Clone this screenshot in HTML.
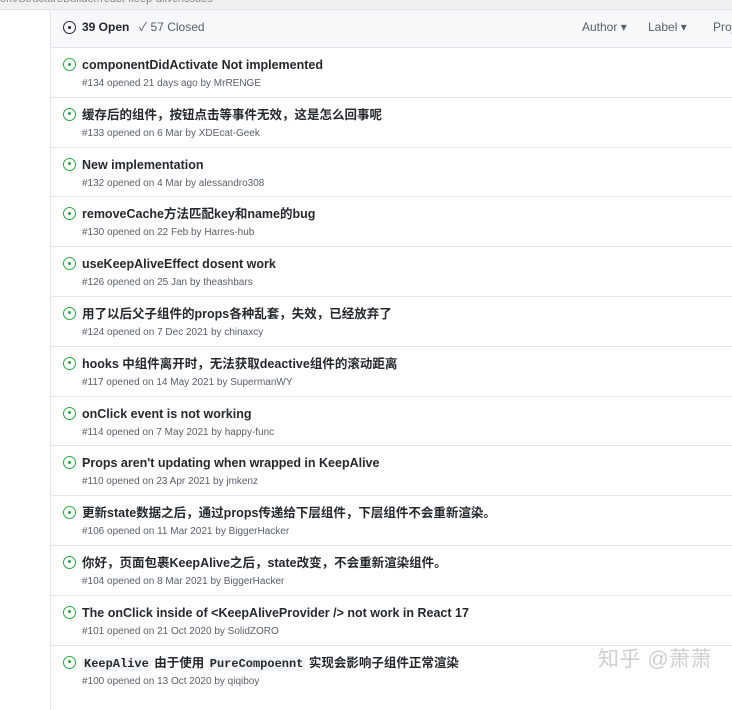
<!DOCTYPE html>
<html><head><meta charset="utf-8"><style>
*{margin:0;padding:0;box-sizing:border-box}
body{width:732px;height:691px;overflow:hidden;background:#fff;font-family:"Liberation Sans","Noto Sans CJK SC",sans-serif;position:relative}
.top{position:absolute;left:0;top:0;width:732px;height:10px;background:#f0f0f0;border-bottom:1px solid #e1e4e8;overflow:hidden}
.top span{position:absolute;left:0;top:-7px;font-size:11px;color:#888}
.box{position:absolute;left:50px;top:10px;width:700px;height:700px;border-left:1px solid #e1e4e8}
.hdr{height:38px;background:#f6f8fa;border-bottom:1px solid #e1e4e8;position:relative;font-size:12px;line-height:14px}
.hdr .o{position:absolute;left:31px;top:10px;font-weight:bold;color:#24292e}
.hdr .c{position:absolute;left:88px;top:10px;color:#586069}
.hdr .f{position:absolute;top:10px;color:#586069}
.icon{position:absolute;left:12px;width:13px;height:13px;border:1.5px solid #28a745;border-radius:50%}
.icon:after{content:"";position:absolute;left:3.5px;top:3.5px;width:3px;height:3px;background:#28a745;border-radius:50%}
.hdr .icon{border-color:#24292e;top:11px}
.hdr .icon:after{background:#24292e}
.row{position:relative;height:49.8px;border-bottom:1px solid #e1e4e8}
.row .icon{top:10px}
.t{position:absolute;left:31px;top:9px;height:16px;line-height:16px;font-size:12.5px;font-weight:bold;color:#24292e;white-space:nowrap}
.m{position:absolute;left:31px;top:30px;height:12px;line-height:12px;font-size:10px;color:#586069;white-space:nowrap}
code{font-family:"Liberation Mono",monospace;background:#f3f4f6;padding:0 2px;font-size:12px;line-height:16px}
.wm{position:absolute;left:598px;top:647px;font-size:21px;line-height:26px;color:#cfcfcf;letter-spacing:0.5px}
</style></head><body>
<div class="top"><span>om/StructureBuilder/react-keep-alive/issues</span></div>
<div class="box">
<div class="hdr"><div class="icon"></div><span class="o">39 Open</span><span class="c">✓ 57 Closed</span>
<span class="f" style="left:531px">Author ▾</span><span class="f" style="left:597px">Label ▾</span><span class="f" style="left:662px">Proj</span></div>
<div class="row"><div class="icon"></div><div class="t">componentDidActivate Not implemented</div><div class="m">#134 opened 21 days ago by MrRENGE</div></div>
<div class="row"><div class="icon"></div><div class="t">缓存后的组件，按钮点击等事件无效，这是怎么回事呢</div><div class="m">#133 opened on 6 Mar by XDEcat-Geek</div></div>
<div class="row"><div class="icon"></div><div class="t">New implementation</div><div class="m">#132 opened on 4 Mar by alessandro308</div></div>
<div class="row"><div class="icon"></div><div class="t">removeCache方法匹配key和name的bug</div><div class="m">#130 opened on 22 Feb by Harres-hub</div></div>
<div class="row"><div class="icon"></div><div class="t">useKeepAliveEffect dosent work</div><div class="m">#126 opened on 25 Jan by theashbars</div></div>
<div class="row"><div class="icon"></div><div class="t">用了以后父子组件的props各种乱套，失效，已经放弃了</div><div class="m">#124 opened on 7 Dec 2021 by chinaxcy</div></div>
<div class="row"><div class="icon"></div><div class="t">hooks 中组件离开时，无法获取deactive组件的滚动距离</div><div class="m">#117 opened on 14 May 2021 by SupermanWY</div></div>
<div class="row"><div class="icon"></div><div class="t">onClick event is not working</div><div class="m">#114 opened on 7 May 2021 by happy-func</div></div>
<div class="row"><div class="icon"></div><div class="t">Props aren't updating when wrapped in KeepAlive</div><div class="m">#110 opened on 23 Apr 2021 by jmkenz</div></div>
<div class="row"><div class="icon"></div><div class="t">更新state数据之后，通过props传递给下层组件，下层组件不会重新渲染。</div><div class="m">#106 opened on 11 Mar 2021 by BiggerHacker</div></div>
<div class="row"><div class="icon"></div><div class="t">你好，页面包裹KeepAlive之后，state改变，不会重新渲染组件。</div><div class="m">#104 opened on 8 Mar 2021 by BiggerHacker</div></div>
<div class="row"><div class="icon"></div><div class="t">The onClick inside of &lt;KeepAliveProvider /&gt; not work in React 17</div><div class="m">#101 opened on 21 Oct 2020 by SolidZORO</div></div>
<div class="row" style="border-bottom:none"><div class="icon"></div><div class="t"><code>KeepAlive</code> 由于使用 <code>PureCompoennt</code> 实现会影响子组件正常渲染</div><div class="m">#100 opened on 13 Oct 2020 by qiqiboy</div></div>
</div>
<div class="wm">知乎 @萧萧</div>
</body></html>
